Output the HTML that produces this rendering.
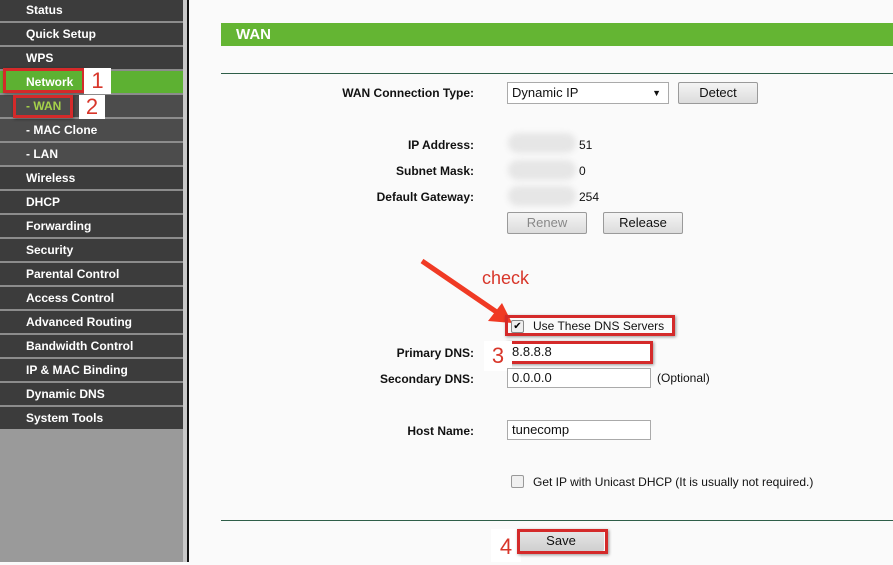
<!DOCTYPE html>
<html><head><style>
body{margin:0;width:893px;height:562px;overflow:hidden;background:#fafafa;font-family:"Liberation Sans",Arial,sans-serif;position:relative}
.a{position:absolute}
#side{left:0;top:0;width:183px;height:562px;background:#9a9a9a}
.it{position:absolute;left:0;width:183px;height:22px;background:#3c3c3c;color:#fff;font-weight:bold;font-size:12px;line-height:22px;text-indent:26px;border-bottom:2px solid #8c8c8c}
.sub{background:#4c4c4c}
.lbl{position:absolute;font-size:12px;font-weight:bold;color:#111;text-align:right;right:419px;white-space:nowrap}
.t{position:absolute;font-size:12px;color:#111;white-space:nowrap}
.inp{position:absolute;background:#fff;border:1px solid #aaa;height:20px;box-sizing:border-box;font-size:12px;line-height:18px;padding-left:4px;color:#111}
.btn{position:absolute;background:linear-gradient(#f4f4f4,#dcdcdc);border:1px solid #9a9a9a;border-radius:2px;height:22px;box-sizing:border-box;font-size:13px;text-align:center;line-height:20px;color:#111}
.red{position:absolute;border:3px solid #d42a2a;box-sizing:border-box;box-shadow:1px 1px 3px rgba(0,0,0,.4)}
.num{position:absolute;background:#fff;color:#d8362a;font-size:22px;text-align:center}
.blur{position:absolute;background:#e6e6e6;border-radius:10px;filter:blur(3px)}
</style></head><body>
<div id="side" class="a">
<div class="it" style="top:-1px">Status</div>
<div class="it" style="top:23px">Quick Setup</div>
<div class="it" style="top:47px">WPS</div>
<div class="it" style="top:71px;background:#5db132">Network</div>
<div class="it sub" style="top:95px;color:#a5d24a">- WAN</div>
<div class="it sub" style="top:119px">- MAC Clone</div>
<div class="it sub" style="top:143px">- LAN</div>
<div class="it" style="top:167px">Wireless</div>
<div class="it" style="top:191px">DHCP</div>
<div class="it" style="top:215px">Forwarding</div>
<div class="it" style="top:239px">Security</div>
<div class="it" style="top:263px">Parental Control</div>
<div class="it" style="top:287px">Access Control</div>
<div class="it" style="top:311px">Advanced Routing</div>
<div class="it" style="top:335px">Bandwidth Control</div>
<div class="it" style="top:359px">IP &amp; MAC Binding</div>
<div class="it" style="top:383px">Dynamic DNS</div>
<div class="it" style="top:407px;border-bottom:none">System Tools</div>
</div>
<div class="a" style="left:183px;top:0;width:4px;height:562px;background:#c8c8c8"></div>
<div class="a" style="left:187px;top:0;width:2px;height:562px;background:#111"></div>

<div class="red" style="left:3px;top:68px;width:82px;height:25px"></div>
<div class="num" style="left:84px;top:68px;width:27px;height:26px;line-height:26px">1</div>
<div class="red" style="left:13px;top:95px;width:60px;height:23px"></div>
<div class="num" style="left:79px;top:95px;width:26px;height:24px;line-height:24px">2</div>

<div class="a" style="left:221px;top:23px;width:672px;height:23px;background:#64b533;color:#fff;font-weight:bold;font-size:15px;line-height:23px;text-indent:15px">WAN</div>
<div class="a" style="left:221px;top:73px;width:672px;height:1px;background:#2e5e48"></div>
<div class="a" style="left:221px;top:520px;width:672px;height:1px;background:#2e5e48"></div>

<div class="lbl" style="top:86px">WAN Connection Type:</div>
<div class="inp" style="left:507px;top:82px;width:162px;height:22px;line-height:20px;font-size:13px">Dynamic IP<span style="position:absolute;right:7px;font-size:9px">▼</span></div>
<div class="btn" style="left:678px;top:82px;width:80px">Detect</div>

<div class="lbl" style="top:138px">IP Address:</div>
<div class="lbl" style="top:164px">Subnet Mask:</div>
<div class="lbl" style="top:190px">Default Gateway:</div>
<div class="blur" style="left:508px;top:133px;width:68px;height:20px"></div>
<div class="blur" style="left:508px;top:160px;width:68px;height:20px"></div>
<div class="blur" style="left:508px;top:186px;width:68px;height:20px"></div>
<div class="t" style="left:579px;top:138px">51</div>
<div class="t" style="left:579px;top:164px">0</div>
<div class="t" style="left:579px;top:190px">254</div>
<div class="btn" style="left:507px;top:212px;width:80px;color:#888">Renew</div>
<div class="btn" style="left:603px;top:212px;width:80px">Release</div>

<div class="t" style="left:482px;top:268px;font-size:18px;color:#d8362a">check</div>
<svg class="a" style="left:0;top:0" width="893" height="562"><line x1="422" y1="261" x2="498" y2="313" stroke="#f03a24" stroke-width="5"/><polygon points="512,323 488,321 502,303" fill="#f03a24"/></svg>

<div class="a" style="left:511px;top:320px;width:11px;height:11px;border:1px solid #888;background:#eee;border-radius:2px;font-size:10px;line-height:11px;text-align:center">✔</div>
<div class="t" style="left:533px;top:319px">Use These DNS Servers</div>
<div class="red" style="left:505px;top:315px;width:170px;height:21px"></div>

<div class="lbl" style="top:346px">Primary DNS:</div>
<div class="inp" style="left:507px;top:342px;width:144px;font-size:13px">8.8.8.8</div>
<div class="red" style="left:506px;top:341px;width:147px;height:23px"></div>
<div class="num" style="left:484px;top:341px;width:28px;height:30px;line-height:30px">3</div>
<div class="lbl" style="top:372px">Secondary DNS:</div>
<div class="inp" style="left:507px;top:368px;width:144px;font-size:13px">0.0.0.0</div>
<div class="t" style="left:657px;top:371px">(Optional)</div>

<div class="lbl" style="top:424px">Host Name:</div>
<div class="inp" style="left:507px;top:420px;width:144px;font-size:13px">tunecomp</div>

<div class="a" style="left:511px;top:475px;width:11px;height:11px;border:1px solid #999;background:#f0f0f0;border-radius:2px"></div>
<div class="t" style="left:533px;top:475px">Get IP with Unicast DHCP (It is usually not required.)</div>

<div class="num" style="left:491px;top:529px;width:30px;height:33px;line-height:36px">4</div>
<div class="btn" style="left:518px;top:531px;width:86px;height:20px;line-height:20px;border:none;background:linear-gradient(#e6e6e6,#cfcfcf)">Save</div>
<div class="red" style="left:517px;top:529px;width:91px;height:25px"></div>
</body></html>
